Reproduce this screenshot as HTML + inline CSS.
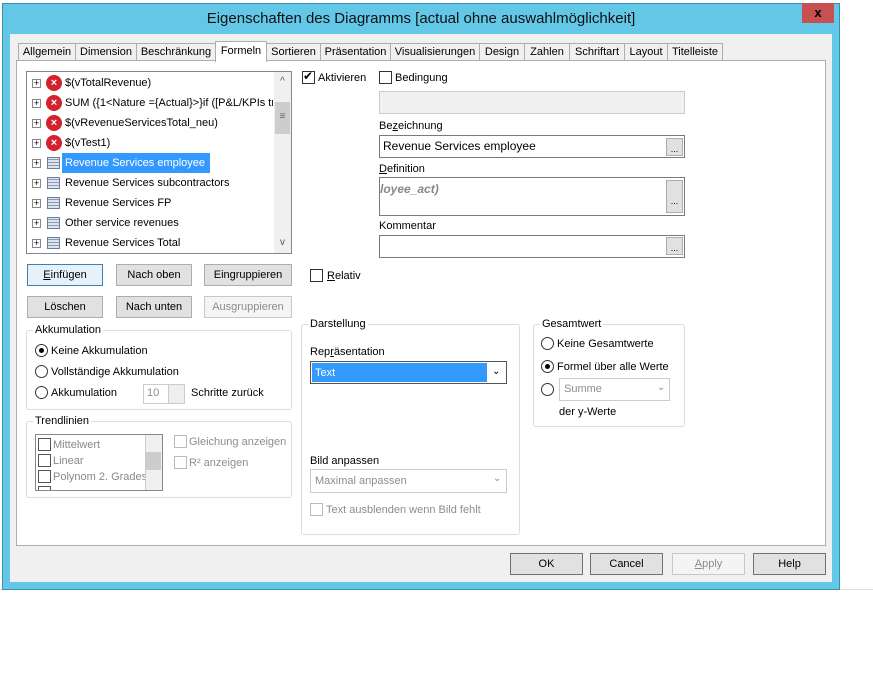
<!DOCTYPE html>
<html><head><meta charset="utf-8"><style>
*{box-sizing:border-box;margin:0;padding:0}
body{width:873px;height:688px;background:#fff;position:relative;overflow:hidden;font-family:"Liberation Sans",sans-serif;font-size:11px;color:#000}
.a{position:absolute}
.t{position:absolute;white-space:nowrap;line-height:14px}
.btn{position:absolute;background:#e1e1e1;border:1px solid #adadad;text-align:center;line-height:20px;font-size:11px;white-space:nowrap}
.grp{position:absolute;border:1px solid #dcdcdc;border-radius:3px}
.gl{position:absolute;background:#fff;padding:0 2px;top:-8px;left:6px;line-height:14px;white-space:nowrap}
.cb{position:absolute;width:13px;height:13px;border:1px solid #333;background:#fff}
.rb{position:absolute;width:13px;height:13px;border:1px solid #333;border-radius:50%;background:#fff}
.inp{position:absolute;background:#fff;border:1px solid #7a7a7a}
.dots{position:absolute;background:#e1e1e1;border:1px solid #adadad;width:17px;font-size:9px;text-align:center}
.dis{color:#8d8d8d}
.row{position:absolute;left:0;height:20px;width:246px;white-space:nowrap;overflow:hidden}
.pl{position:absolute;left:5px;top:6px;width:9px;height:9px;border:1px solid #888;background:#fff;font-size:9px;line-height:7px;text-align:center}
.x{position:absolute;left:19px;top:2px;width:16px;height:16px;border-radius:50%;background:#d3212d;color:#fff;font-size:11px;font-weight:bold;text-align:center;line-height:16px}
.g{position:absolute;left:20px;top:4px;width:13px;height:12px;border:1px solid #6b7d99;background:repeating-linear-gradient(0deg,#dde4ee 0 2px,#8a9ab5 2px 3px)}
.rt{position:absolute;left:38px;top:3px;line-height:14px;white-space:nowrap}
.tab{position:absolute;top:43px;height:18px;border:1px solid #adadad;background:#f0f0f0;text-align:center;line-height:16px;white-space:nowrap;overflow:hidden;font-size:11px}
</style></head><body>
<div class="a" style="left:0;top:589px;width:873px;height:1px;background:#ddd"></div>
<div class="a" style="left:2px;top:3px;width:838px;height:587px;background:#63c7e7;border:1px solid #3a8fb0"></div>
<div class="t" style="left:0;width:842px;top:10px;text-align:center;font-size:15px;line-height:18px;color:#111">Eigenschaften des Diagramms [actual ohne auswahlmöglichkeit]</div>
<div class="a" style="left:802px;top:3px;width:32px;height:20px;background:#c75050;color:#000;font-weight:bold;text-align:center;line-height:20px;font-size:13px">x</div>
<div class="a" style="left:10px;top:34px;width:822px;height:548px;background:#f0f0f0"></div>
<div class="a" style="left:16px;top:60px;width:810px;height:486px;background:#fff;border:1px solid #adadad"></div>
<div class="tab" style="left:18px;width:58px">Allgemein</div>
<div class="tab" style="left:75px;width:62px">Dimension</div>
<div class="tab" style="left:136px;width:80px">Beschränkung</div>
<div class="tab" style="left:215px;top:41px;width:52px;height:21px;border-bottom:none;background:#fff;line-height:18px">Formeln</div>
<div class="tab" style="left:266px;width:55px">Sortieren</div>
<div class="tab" style="left:320px;width:71px">Präsentation</div>
<div class="tab" style="left:390px;width:90px">Visualisierungen</div>
<div class="tab" style="left:479px;width:46px">Design</div>
<div class="tab" style="left:524px;width:46px">Zahlen</div>
<div class="tab" style="left:569px;width:56px">Schriftart</div>
<div class="tab" style="left:624px;width:44px">Layout</div>
<div class="tab" style="left:667px;width:56px">Titelleiste</div>

<div class="a" style="left:26px;top:71px;width:266px;height:183px;background:#fff;border:1px solid #828790;overflow:hidden">
 <div class="a" style="left:0;top:0;width:246px;height:181px;overflow:hidden">
  <div class="row" style="top:1px"><div class="pl">+</div><div class="x">×</div><div class="rt">$(vTotalRevenue)</div></div>
  <div class="row" style="top:21px"><div class="pl">+</div><div class="x">×</div><div class="rt">SUM ({1&lt;Nature ={Actual}&gt;}if ([P&amp;L/KPIs tra</div></div>
  <div class="row" style="top:41px"><div class="pl">+</div><div class="x">×</div><div class="rt">$(vRevenueServicesTotal_neu)</div></div>
  <div class="row" style="top:61px"><div class="pl">+</div><div class="x">×</div><div class="rt">$(vTest1)</div></div>
  <div class="row" style="top:81px"><div class="pl">+</div><div class="g"></div><div class="a" style="left:35px;top:0;width:148px;height:20px;background:#3399ff"></div><div class="rt" style="color:#fff">Revenue Services employee</div></div>
  <div class="row" style="top:101px"><div class="pl">+</div><div class="g"></div><div class="rt">Revenue Services subcontractors</div></div>
  <div class="row" style="top:121px"><div class="pl">+</div><div class="g"></div><div class="rt">Revenue Services FP</div></div>
  <div class="row" style="top:141px"><div class="pl">+</div><div class="g"></div><div class="rt">Other service revenues</div></div>
  <div class="row" style="top:161px"><div class="pl">+</div><div class="g"></div><div class="rt">Revenue Services Total</div></div>
 </div>
 <div class="a" style="left:247px;top:0;width:17px;height:181px;background:#f0f0f0"></div>
 <div class="t" style="left:247px;top:3px;width:17px;text-align:center;font-size:10px;color:#555">^</div>
 <div class="a" style="left:248px;top:30px;width:15px;height:32px;background:#cdcdcd;text-align:center;color:#666;line-height:30px;font-size:10px">≡</div>
 <div class="t" style="left:247px;top:164px;width:17px;text-align:center;font-size:10px;color:#555">v</div>
</div>

<div class="btn" style="left:27px;top:264px;width:76px;height:22px;border-color:#3c7fb1;background:#e5f1fb"><u>E</u>infügen</div>
<div class="btn" style="left:116px;top:264px;width:76px;height:22px">Nach oben</div>
<div class="btn" style="left:204px;top:264px;width:88px;height:22px">Eingruppieren</div>
<div class="btn" style="left:27px;top:296px;width:76px;height:22px">Löschen</div>
<div class="btn" style="left:116px;top:296px;width:76px;height:22px">Nach unten</div>
<div class="btn dis" style="left:204px;top:296px;width:88px;height:22px;background:#f4f4f4;border-color:#c8c8c8">Ausgruppieren</div>

<div class="cb" style="left:310px;top:269px"></div><div class="t" style="left:327px;top:269px"><u>R</u>elativ</div>

<div class="grp" style="left:26px;top:330px;width:266px;height:80px"><div class="gl">Akkumulation</div></div>
<div class="rb" style="left:35px;top:344px"></div><div class="a" style="left:39px;top:348px;width:5px;height:5px;border-radius:50%;background:#000"></div>
<div class="t" style="left:51px;top:344px">Keine Akkumulation</div>
<div class="rb" style="left:35px;top:365px"></div><div class="t" style="left:51px;top:365px">Vollständige Akkumulation</div>
<div class="rb" style="left:35px;top:386px"></div><div class="t" style="left:51px;top:386px">Akkumulation</div>
<div class="a dis" style="left:143px;top:384px;width:42px;height:20px;border:1px solid #ccc;background:#fff;padding:2px 3px">10</div>
<div class="a" style="left:168px;top:385px;width:16px;height:18px;background:#eee;border-left:1px solid #ccc"></div>
<div class="t" style="left:191px;top:386px">Schritte zurück</div>

<div class="grp" style="left:26px;top:421px;width:266px;height:77px"><div class="gl">Trendlinien</div></div>
<div class="a" style="left:35px;top:434px;width:128px;height:57px;border:1px solid #828790;background:#fff;overflow:hidden">
 <div class="cb" style="left:2px;top:3px;border-color:#555"></div><div class="t" style="left:17px;top:3px;color:#888">Mittelwert</div>
 <div class="cb" style="left:2px;top:19px;border-color:#555"></div><div class="t" style="left:17px;top:19px;color:#888">Linear</div>
 <div class="cb" style="left:2px;top:35px;border-color:#555"></div><div class="t" style="left:17px;top:35px;color:#888">Polynom 2. Grades</div>
 <div class="cb" style="left:2px;top:51px;border-color:#555"></div>
 <div class="a" style="left:109px;top:0;width:17px;height:55px;background:#f0f0f0;border-left:1px solid #ccc"></div>
 <div class="a" style="left:110px;top:17px;width:15px;height:18px;background:#cdcdcd"></div>
</div>
<div class="cb" style="left:174px;top:435px;border-color:#bbb"></div><div class="t dis" style="left:189px;top:435px">Gleichung anzeigen</div>
<div class="cb" style="left:174px;top:456px;border-color:#bbb"></div><div class="t dis" style="left:189px;top:456px">R² anzeigen</div>

<div class="cb" style="left:302px;top:71px"></div><div class="t" style="left:303px;top:69px;font-size:12px">✔</div>
<div class="t" style="left:318px;top:71px">Aktivieren</div>
<div class="cb" style="left:379px;top:71px"></div><div class="t" style="left:395px;top:71px">Bedingung</div>
<div class="a" style="left:379px;top:91px;width:306px;height:23px;background:#f0f0f0;border:1px solid #ccc"></div>
<div class="t" style="left:379px;top:119px">Be<u>z</u>eichnung</div>
<div class="inp" style="left:379px;top:135px;width:306px;height:23px"></div>
<div class="t" style="left:383px;top:139px;font-size:12px">Revenue Services employee</div>
<div class="dots" style="left:666px;top:138px;height:18px;line-height:20px">...</div>
<div class="t" style="left:379px;top:162px"><u>D</u>efinition</div>
<div class="inp" style="left:379px;top:177px;width:306px;height:39px"></div>
<div class="t" style="left:380px;top:182px;font-style:italic;font-weight:bold;color:#888;font-size:12px">loyee_act)</div>
<div class="dots" style="left:666px;top:180px;height:33px;line-height:40px">...</div>
<div class="t" style="left:379px;top:219px">Kommentar</div>
<div class="inp" style="left:379px;top:235px;width:306px;height:23px"></div>
<div class="dots" style="left:666px;top:237px;height:18px;line-height:20px">...</div>

<div class="grp" style="left:301px;top:324px;width:219px;height:211px"><div class="gl">Darstellung</div></div>
<div class="t" style="left:310px;top:345px">Rep<u>r</u>äsentation</div>
<div class="a" style="left:310px;top:361px;width:197px;height:23px;border:1px solid #555;background:#fff"></div>
<div class="a" style="left:312px;top:363px;width:175px;height:19px;background:#3399ff"></div>
<div class="t" style="left:315px;top:366px;color:#fff">Text</div>
<div class="t" style="left:492px;top:365px;font-size:10px">⌄</div>
<div class="t" style="left:310px;top:454px">Bild anpassen</div>
<div class="a" style="left:310px;top:469px;width:197px;height:24px;border:1px solid #ccc;background:#fff"></div>
<div class="t dis" style="left:315px;top:474px">Maximal anpassen</div>
<div class="t dis" style="left:493px;top:472px;font-size:10px">⌄</div>
<div class="cb" style="left:310px;top:503px;border-color:#bbb"></div><div class="t dis" style="left:326px;top:503px">Text ausblenden wenn Bild fehlt</div>

<div class="grp" style="left:533px;top:324px;width:152px;height:103px"><div class="gl">Gesamtwert</div></div>
<div class="rb" style="left:541px;top:337px"></div><div class="t" style="left:557px;top:337px">Keine Gesamtwerte</div>
<div class="rb" style="left:541px;top:360px"></div><div class="a" style="left:545px;top:364px;width:5px;height:5px;border-radius:50%;background:#000"></div>
<div class="t" style="left:557px;top:360px">Formel über alle Werte</div>
<div class="rb" style="left:541px;top:383px"></div>
<div class="a" style="left:559px;top:378px;width:111px;height:23px;border:1px solid #ccc;background:#fff"></div>
<div class="t dis" style="left:564px;top:382px">Summe</div>
<div class="t dis" style="left:657px;top:381px;font-size:10px">⌄</div>
<div class="t" style="left:559px;top:405px">der y-Werte</div>

<div class="btn" style="left:510px;top:553px;width:73px;height:22px;border-color:#707070">OK</div>
<div class="btn" style="left:590px;top:553px;width:73px;height:22px;border-color:#707070">Cancel</div>
<div class="btn dis" style="left:672px;top:553px;width:73px;height:22px;background:#f4f4f4;border-color:#c8c8c8"><u>A</u>pply</div>
<div class="btn" style="left:753px;top:553px;width:73px;height:22px;border-color:#707070">Help</div>
</body></html>
